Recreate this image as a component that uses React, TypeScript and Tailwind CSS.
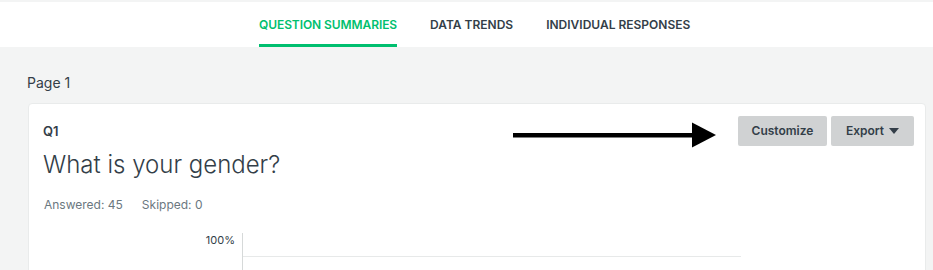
import React from "react";

const font = { fontFamily: "Inter, 'Open Sans', Roboto, sans-serif" };

const tabs = [
  { label: "QUESTION SUMMARIES", active: true },
  { label: "DATA TRENDS", active: false },
  { label: "INDIVIDUAL RESPONSES", active: false },
];

export default function App() {
  return (
    <div className="relative w-[933px] h-[270px] overflow-hidden bg-[#f3f4f4] pt-[2px]" style={font}>
      <nav className="h-[45px] bg-white flex pl-[259px] gap-[33px]">
        {tabs.map((t) => (
          <div
            key={t.label}
            className={
              t.active
                ? "h-full flex items-center border-b-[3px] border-[#00bf6f] pt-[3px] text-[12px] tracking-[-0.08px] font-semibold text-[#00bf6f]"
                : "h-full flex items-center border-b-[3px] border-transparent pt-[3px] text-[12px] font-semibold text-[#333e48]"
            }
          >
            {t.label}
          </div>
        ))}
      </nav>

      <main className="px-[28px] pt-[26px]">
        <div className="text-[14px] leading-[20px] text-[#333e48] -ml-[1px]">Page 1</div>

        <section className="mt-[10px] w-[898px] bg-white rounded-[4px] border border-[#e9ebeb] pl-[14px] pr-[11px] pt-[12px] h-[200px]">
          <div className="flex justify-between items-start">
            <div className="pt-[6px]">
              <div className="text-[13px] leading-[18px] font-semibold text-[#333e48]">Q1</div>
              <h2 className="mt-[9px] text-[24px] leading-[32px] font-light text-[#333e48]">What is your gender?</h2>
              <div className="mt-[16px] flex gap-[19px] text-[12px] leading-[16px] text-[#6b787f] pl-[1px]">
                <span>Answered: 45</span>
                <span>Skipped: 0</span>
              </div>
            </div>
            <div className="flex gap-[4px]">
              <button className="h-[30px] px-[13.5px] rounded-[2px] bg-[#d0d2d3] text-[12px] font-semibold text-[#333e48]">
                Customize
              </button>
              <button className="h-[30px] px-[15px] rounded-[2px] bg-[#d0d2d3] text-[12px] font-semibold text-[#333e48] flex items-center gap-[5px]">
                Export
                <svg width="10" height="6" viewBox="0 0 10 6">
                  <path d="M0 0 L10 0 L5 6 Z" fill="#333e48" />
                </svg>
              </button>
            </div>
          </div>

          <div className="mt-[20px] flex">
            <div className="w-[199px] text-right pr-[7px] text-[11px] leading-[14px] text-[#333e48]">100%</div>
            <div className="w-[499px] border-l border-[#d6d9d9] h-[60px] pt-[23px]">
              <div className="border-t border-[#e7e9e9]" />
            </div>
          </div>
        </section>
      </main>

      <svg className="absolute left-[513px] top-[122px]" width="204" height="26" viewBox="0 0 204 26">
        <rect x="0" y="11" width="182" height="4.5" fill="#000" />
        <path d="M179 0.5 L203 13 L179 25.5 Z" fill="#000" />
      </svg>
    </div>
  );
}
